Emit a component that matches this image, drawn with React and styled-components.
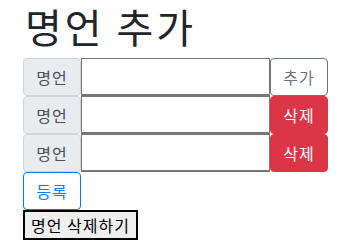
import React from "react";
import styled, { createGlobalStyle, css } from "styled-components";

const GlobalStyle = createGlobalStyle`
  body {
    margin: 0;
    background: #fff;
    font-family: "Noto Sans CJK KR", "Noto Sans", sans-serif;
    color: #212529;
  }
`;

const Page = styled.div`
  padding: 0 23px;
`;

const Title = styled.h1`
  margin: 0 0 6px;
  padding-left: 2px;
  font-size: 40px;
  font-weight: 400;
  line-height: 52px;
  letter-spacing: 3px;
  color: #212529;
`;

const Group = styled.div`
  display: flex;
  align-items: stretch;
`;

const Label = styled.span`
  display: flex;
  align-items: center;
  justify-content: center;
  box-sizing: border-box;
  width: 58px;
  height: 38px;
  padding: 6px 0;
  font-size: 16px;
  line-height: 24px;
  letter-spacing: 1px;
  color: #495057;
  background: #e9ecef;
  border: 1px solid #ced4da;
  border-radius: 4px;
`;

const Field = styled.input`
  box-sizing: border-box;
  width: 189px;
  height: 38px;
  margin: 0;
  padding: 1px 2px;
  border: 1px solid #767676;
  border-bottom-width: 2px;
  border-radius: 0;
  background: #fff;
  font-family: inherit;
  font-size: 14px;
`;

const variants = {
  secondary: css`
    color: #6c757d;
    background: #fff;
    border-color: #6c757d;
  `,
  danger: css`
    color: #fff;
    background: #dc3545;
    border-color: #dc3545;
  `,
  primary: css`
    color: #007bff;
    background: #fff;
    border-color: #007bff;
  `,
};

const Btn = styled.button`
  display: block;
  box-sizing: border-box;
  width: 58px;
  height: 38px;
  margin: 0;
  padding: 6px 0;
  font-family: inherit;
  font-size: 16px;
  line-height: 24px;
  letter-spacing: 1px;
  border: 1px solid;
  border-radius: 4px;
  ${(p) => variants[p.$variant]}
`;

const Plain = styled.button`
  display: block;
  box-sizing: border-box;
  width: 115px;
  height: 30px;
  margin: 0;
  padding: 1px 0;
  font-family: inherit;
  font-size: 16px;
  line-height: 24px;
  letter-spacing: 1px;
  color: #000;
  background: #efefef;
  border: 2px solid #000;
  border-radius: 0;
`;

const rows = [
  { action: "추가", variant: "secondary" },
  { action: "삭제", variant: "danger" },
  { action: "삭제", variant: "danger" },
];

export default function App() {
  return (
    <>
      <GlobalStyle />
      <Page>
        <Title>명언 추가</Title>
        {rows.map((r, i) => (
          <Group key={i}>
            <Label>명언</Label>
            <Field type="text" />
            <Btn $variant={r.variant}>{r.action}</Btn>
          </Group>
        ))}
        <Btn $variant="primary">등록</Btn>
        <Plain>명언 삭제하기</Plain>
      </Page>
    </>
  );
}
